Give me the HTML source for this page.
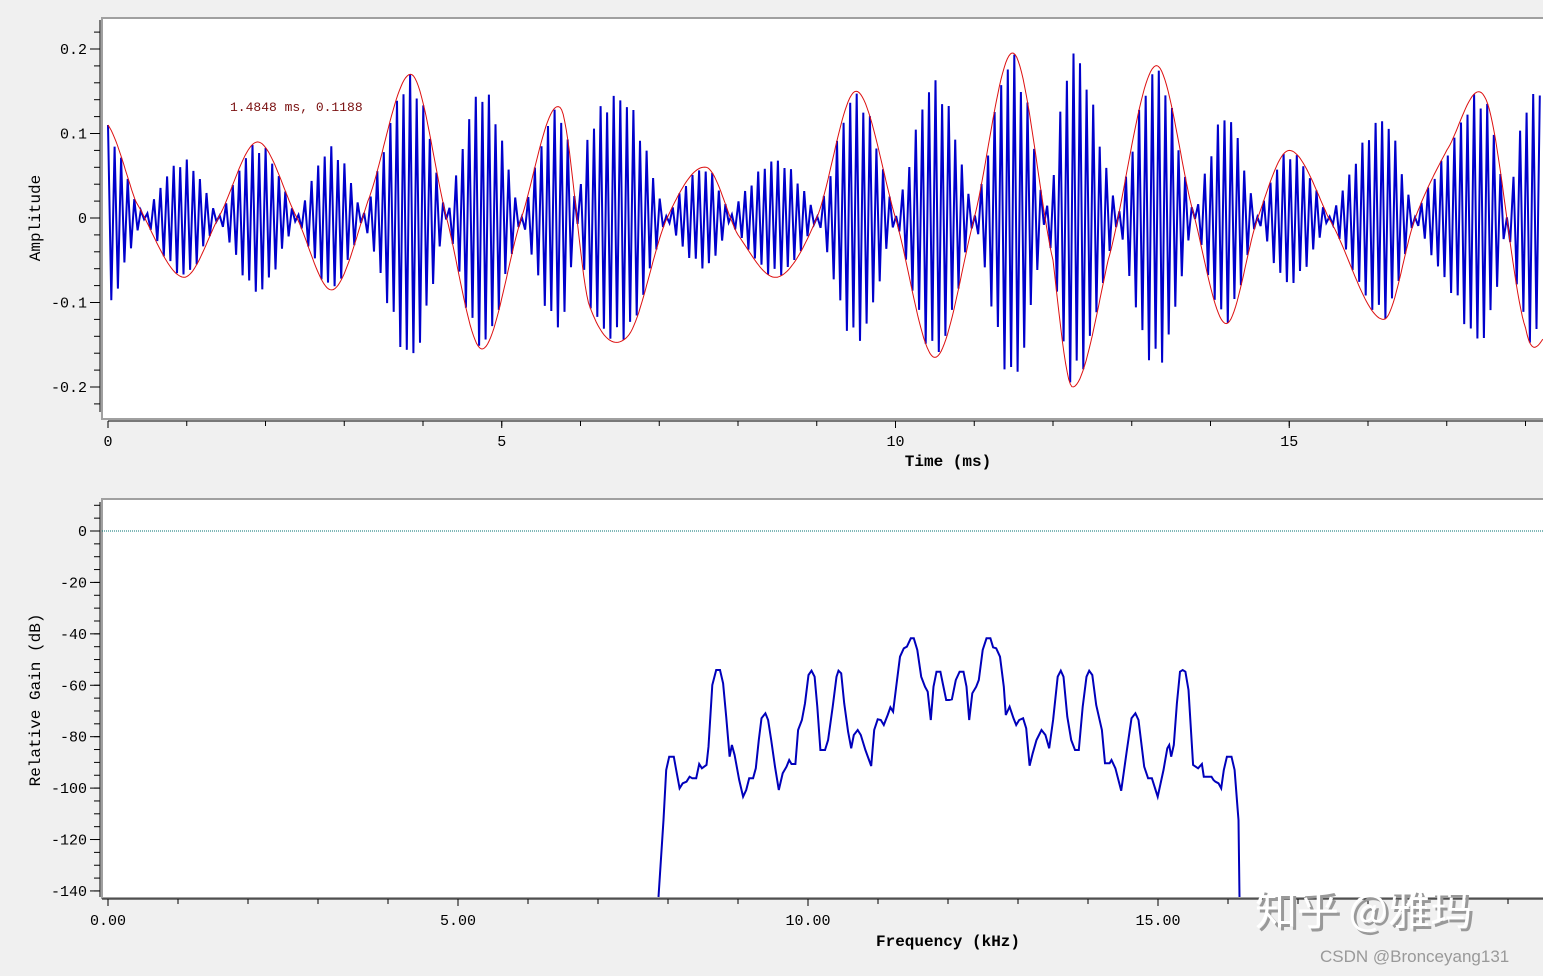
<!DOCTYPE html>
<html><head><meta charset="utf-8">
<style>
html,body{margin:0;padding:0;background:#f0f0f0;width:1543px;height:976px;overflow:hidden}
svg{display:block}
text{font-family:"Liberation Mono","Noto Sans CJK SC",monospace}
</style></head>
<body>
<svg id="s" width="1543" height="976" viewBox="0 0 1543 976" xmlns="http://www.w3.org/2000/svg">
<rect x="0" y="0" width="1543" height="976" fill="#f0f0f0"/>
<rect x="102" y="18" width="1443" height="401" fill="#fff" stroke="#a0a0a0" stroke-width="2"/>
<rect x="102" y="499" width="1443" height="399" fill="#fff" stroke="#a0a0a0" stroke-width="2"/>
<g id="g"></g>
<text x="230" y="111" font-size="13" fill="#7a1010">1.4848 ms, 0.1188</text>
<text x="948" y="466" font-size="16" font-weight="bold" text-anchor="middle" fill="#000">Time (ms)</text>
<text transform="translate(40,218) rotate(-90)" font-size="16" text-anchor="middle" fill="#000">Amplitude</text>
<text x="948" y="946" font-size="16" font-weight="bold" text-anchor="middle" fill="#000">Frequency (kHz)</text>
<text transform="translate(40,700) rotate(-90)" font-size="16" text-anchor="middle" fill="#000">Relative Gain (dB)</text>
<line x1="102" y1="531" x2="1543" y2="531" stroke="#007070" stroke-width="1" stroke-dasharray="1,1"/>
<text x="1258" y="928" font-size="42" fill="#999" style="font-family:'Noto Sans CJK SC',sans-serif">知乎 @雅玛</text>
<text x="1255" y="925" font-size="42" fill="#fff" style="font-family:'Noto Sans CJK SC',sans-serif">知乎 @雅玛</text>
<text x="1320" y="962" font-size="17" fill="#999" style="font-family:'Liberation Sans',sans-serif">CSDN @Bronceyang131</text>
</svg>
<script>
var g=document.getElementById('g'),o='';
function L(x1,y1,x2,y2,c,w){o+='<line x1="'+x1+'" y1="'+y1+'" x2="'+x2+'" y2="'+y2+'" stroke="'+(c||'#000')+'" stroke-width="'+(w||1)+'"/>';}
function T(x,y,s,a){o+='<text x="'+x+'" y="'+y+'" font-size="15" fill="#000" text-anchor="'+(a||'end')+'">'+s+'</text>';}
L(100,20,100,412);
for(var v=-0.22;v<=0.221;v+=0.02){var y=218-v*845;L(94,y,100,y);}
[[0.2,'0.2'],[0.1,'0.1'],[0,'0'],[-0.1,'-0.1'],[-0.2,'-0.2']].forEach(function(p){var y=218-p[0]*845;L(90,y,100,y);T(87,y+5,p[1]);});
L(108,421,1543,421);
for(var t=0;t<=18.3;t+=1){var x=108+t*78.75;L(x,421,x,426);}
[0,5,10,15].forEach(function(t){var x=108+t*78.75;L(x,421,x,428);T(x,446,t,'middle');});
L(100,502,100,897);
for(var d=10;d>=-140;d-=5){var y=531-d*2.571;L(94,y,100,y);}
for(var d=0;d>=-140;d-=20){var y=531-d*2.571;L(90,y,100,y);T(87,y+5,d==0?'0':d);}
L(102,899,1543,899);
for(var f=0;f<=20.5;f+=1){var x=108+f*70;L(x,899,x,904);}
[0,5,10,15].forEach(function(f){var x=108+f*70;L(x,899,x,906);T(x,925,f.toFixed(2),'middle');});
var K=[[-0.1,0.11],[0,0.11],[0.35,0.02],[0.95,-0.07],[1.4,0.0],[1.9,0.09],[2.4,0.0],[2.85,-0.085],[3.3,0.02],[3.85,0.17],[4.3,0.0],[4.75,-0.155],[5.25,0.0],[5.75,0.13],[6.1,-0.1],[6.6,-0.14],[7.1,0.0],[7.6,0.06],[8.0,-0.02],[8.5,-0.07],[9.0,0.0],[9.5,0.15],[10.0,0.0],[10.5,-0.165],[11.0,0.0],[11.5,0.195],[12.0,-0.05],[12.25,-0.2],[12.7,-0.05],[13.3,0.18],[13.8,0.0],[14.2,-0.125],[14.6,0.0],[15.0,0.08],[15.5,0.0],[16.2,-0.12],[16.6,0.0],[17.0,0.08],[17.5,0.14],[18.0,-0.13],[18.3,-0.135],[18.5,-0.1]];
function R(t){for(var i=1;i<K.length-2;i++){if(t<=K[i+1][0]){var p0=K[i-1][1],p1=K[i][1],p2=K[i+1][1],p3=K[i+2][1];var u=(t-K[i][0])/(K[i+1][0]-K[i][0]);return 0.5*((2*p1)+(-p0+p2)*u+(2*p0-5*p1+4*p2-p3)*u*u+(-p0+3*p1-3*p2+p3)*u*u*u);}}return K[K.length-2][1];}
var pb='',pr='';
for(var k=0;;k++){var t=k*0.0417;if(t>18.22)break;var a=Math.abs(R(t));var v=a*(k%2?-1:1)*(0.85+0.15*Math.abs(Math.cos(t*5.3+k*0.7)));if(k==0)v=0.11;pb+=(k?'L':'M')+(108+t*78.75).toFixed(1)+' '+(218-v*845).toFixed(1);}
for(var t=0;t<=18.22;t+=0.02){pr+=(t?'L':'M')+(108+t*78.75).toFixed(1)+' '+(218-R(t)*845).toFixed(1);}
o+='<path d="'+pb+'" fill="none" stroke="#0000cc" stroke-width="2"/>';
o+='<path d="'+pr+'" fill="none" stroke="#dd1111" stroke-width="1"/>';
var Z=[[35,600],[42,450],[50,410],[62,410],[68,450],[77,505],[85,490],[95,485],[103,470],[110,475],[120,475],[128,432],[135,445],[147,435],[152,380],[162,195],[172,150],[182,150],[190,190],[198,290],[207,410],[213,375],[220,405],[232,480],[242,530],[250,510],[258,475],[268,475],[275,445],[283,360],[290,295],[300,280],[307,300],[315,360],[325,440],[335,510],[345,460],[355,440],[362,420],[368,432],[378,432],[385,330],[395,300],[403,250],[412,165],[420,152],[428,170],[435,260],[443,390],[455,390],[463,360],[475,260],[485,170],[490,152],[497,160],[505,250],[515,335],[523,385],[530,345],[540,330],[548,345],[560,390],[575,438],[583,330],[592,298],[600,300],[608,315],[618,285],[625,262],[632,275],[640,200],[650,110],[660,85],[668,80],[678,55],[686,55],[695,90],[705,170],[715,200],[722,215],[730,300],[737,200],[745,155],[755,155],[762,195],[770,240],[778,240],[785,238],[795,180],[805,155],[815,155],[823,200],[830,300],[838,220],[848,200],[855,180],[865,90],[875,55],[885,55],[892,82],[900,85],[910,110],[920,200],[925,285],[935,260],[945,295],[952,315],[960,300],[970,295],[978,325],[987,437],[995,400],[1005,360],[1018,330],[1028,345],[1038,385],[1048,300],[1060,170],[1068,152],[1075,170],[1085,290],[1095,360],[1105,390],[1115,390],[1125,260],[1135,170],[1142,152],[1150,165],[1160,255],[1175,330],[1183,430],[1195,430],[1200,420],[1210,445],[1225,512],[1240,390],[1252,295],[1262,280],[1270,300],[1285,440],[1295,475],[1305,475],[1320,530],[1335,450],[1345,385],[1350,375],[1355,410],[1362,375],[1370,250],[1378,155],[1385,150],[1392,155],[1400,210],[1412,435],[1425,445],[1435,432],[1440,470],[1455,470],[1460,470],[1465,480],[1470,485],[1478,490],[1485,505],[1492,450],[1500,410],[1512,410],[1520,450],[1528,570],[1530,600]];
var ps='M658.5 897';
Z.forEach(function(p){ps+='L'+(650+p[0]/2.6).toFixed(1)+' '+(620+p[1]/3).toFixed(1);});
ps+='L1239.5 897';
o+='<path d="'+ps+'" fill="none" stroke="#0000bb" stroke-width="2"/>';
g.innerHTML=o;
</script>
</body></html>
